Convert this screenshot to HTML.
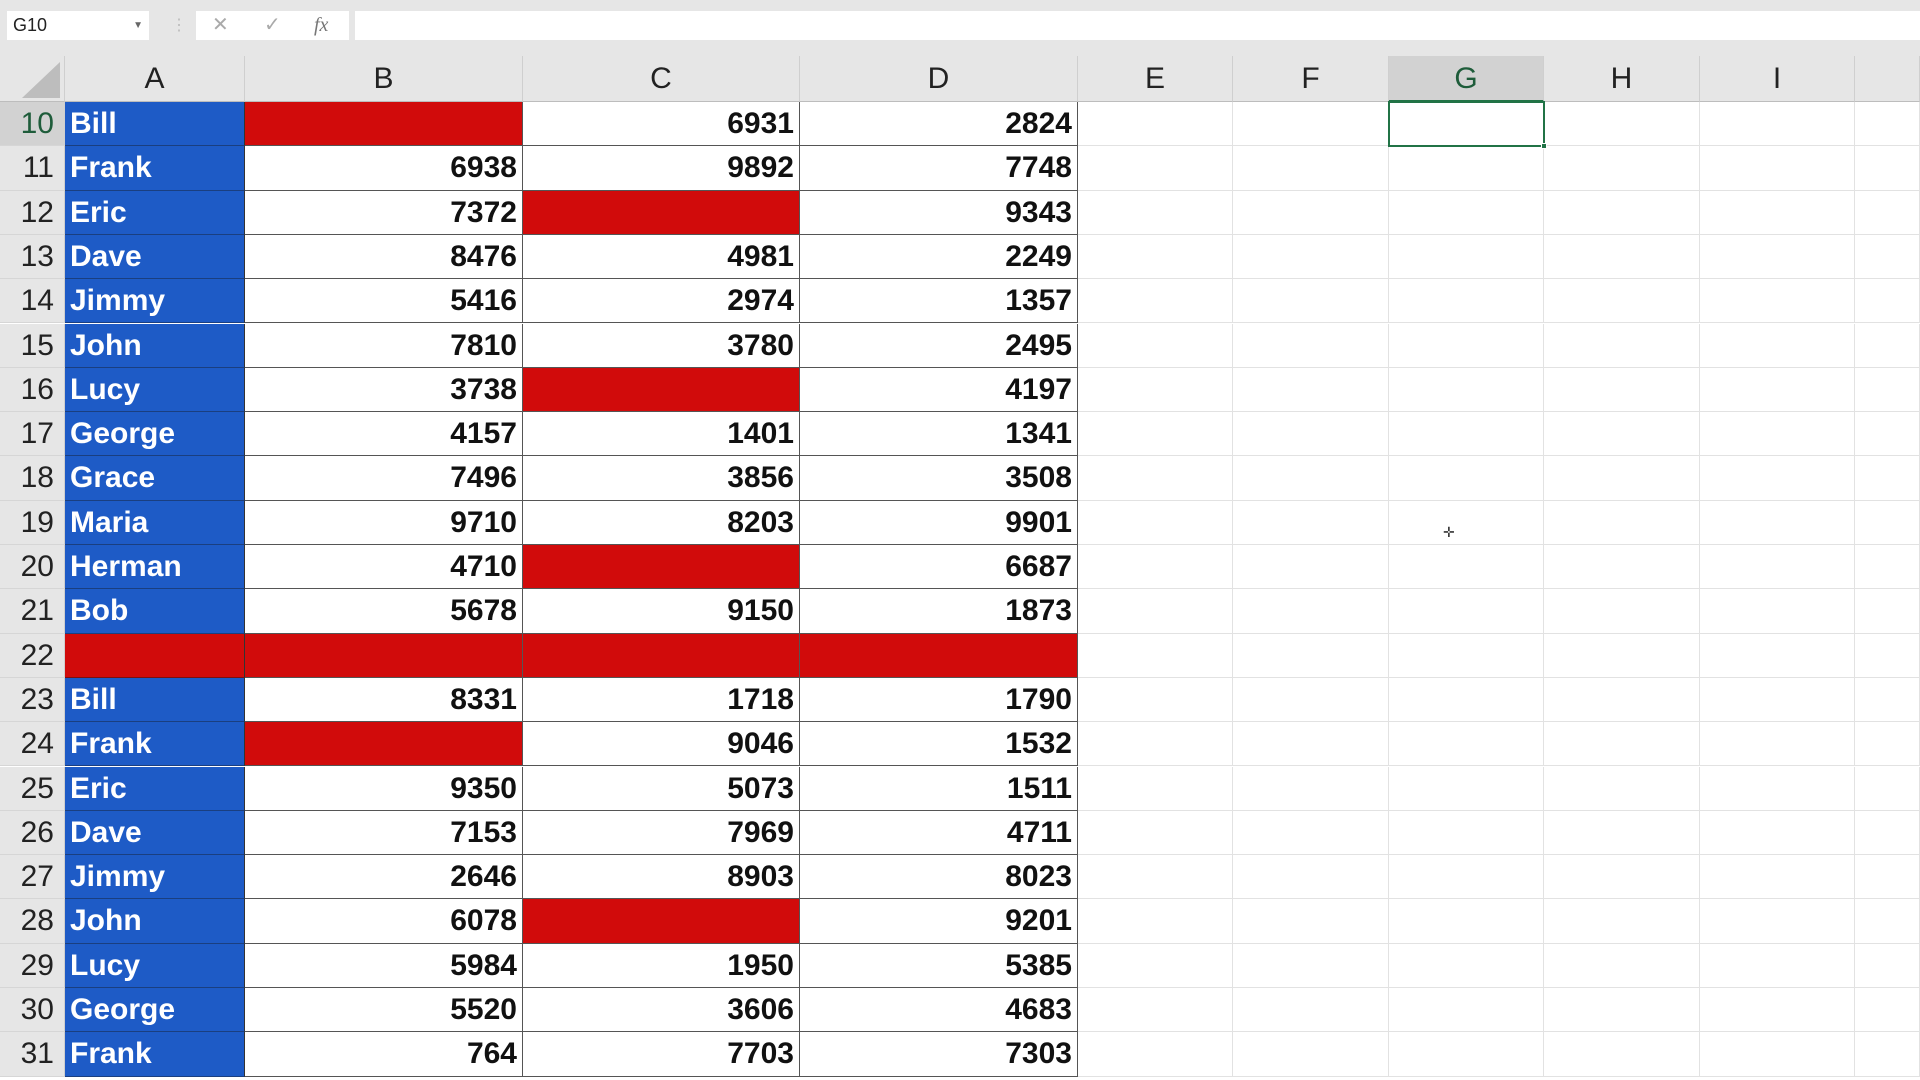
<!DOCTYPE html>
<html><head><meta charset="utf-8"><style>
*{box-sizing:border-box;margin:0;padding:0}
body{width:1920px;height:1080px;overflow:hidden;background:#fff;font-family:"Liberation Sans",sans-serif;position:relative}
.top{position:absolute;left:0;top:0;width:1920px;height:56px;background:#e6e6e6}
.nb{position:absolute;left:7px;top:11px;width:142px;height:29px;background:#fff;font-size:18px;line-height:29px;padding-left:6px;color:#222}
.nb span{position:absolute;right:6px;top:0;font-size:10px;color:#666}
.fx{position:absolute;left:196px;top:11px;width:153px;height:29px;background:#fff;color:#aaa;font-size:20px;line-height:29px}
.fin{position:absolute;left:355px;top:11px;width:1565px;height:29px;background:#fff}
.dots{position:absolute;left:171px;top:15px;color:#bbb;font-size:16px}
.hdr{position:absolute;top:56px;height:46px;background:#e6e6e6;border-right:1px solid #cfcfcf;border-bottom:1px solid #bdbdbd;text-align:center;font-size:30px;line-height:46px;color:#222}
.row{position:absolute;left:0;height:44.3px;width:1920px}
.c{position:absolute;top:0;height:44.3px;border-right:1px solid #e2e2e2;border-bottom:1px solid #e2e2e2}
.rh{left:0;width:65px;background:#e6e6e6;border-right:1px solid #cfcfcf;border-bottom:1px solid #d6d6d6;font-size:30px;line-height:44px;text-align:right;padding-right:10px;color:#222}
.a{left:65px;width:180px;background:#1e5bc6;color:#fff;font-weight:bold;font-size:30px;line-height:44px;padding-left:5px;border-right:1px solid #333;border-bottom:1px solid #1a3f80}
.n{width:278px;font-weight:bold;font-size:30px;line-height:44px;text-align:right;padding-right:5px;color:#111;border-right:1px solid #555;border-bottom:1px solid #555}
.b{left:245px}.cc{left:523px;width:277px}.d{left:800px}
.r{background:#d10b0b}
.e{left:1078px;width:155px}.f{left:1233px;width:156px}.g{left:1389px;width:155px}.h{left:1544px;width:156px}.i{left:1700px;width:155px}.j{left:1855px;width:65px}
</style></head><body>
<div class="top"></div>
<div class="nb">G10<span>▼</span></div>
<div class="dots">⋮</div>
<div class="fx"><span style="position:absolute;left:16px">✕</span><span style="position:absolute;left:68px">✓</span><span style="position:absolute;left:118px;font-family:'Liberation Serif',serif;font-style:italic;color:#777">fx</span></div>
<div class="fin"></div>
<div class="hdr" style="left:0;width:65px"><svg width="65" height="46" style="position:absolute;left:0;top:0"><polygon points="60,6 60,42 22,42" fill="#bdbdbd"/></svg></div>
<div class="hdr" style="left:65px;width:180px">A</div>
<div class="hdr" style="left:245px;width:278px">B</div>
<div class="hdr" style="left:523px;width:277px">C</div>
<div class="hdr" style="left:800px;width:278px">D</div>
<div class="hdr" style="left:1078px;width:155px">E</div>
<div class="hdr" style="left:1233px;width:156px">F</div>
<div class="hdr" style="left:1389px;width:155px;background:#d2d2d2;color:#1e5c3a;border-bottom:2px solid #217346">G</div>
<div class="hdr" style="left:1544px;width:156px">H</div>
<div class="hdr" style="left:1700px;width:155px">I</div>
<div class="hdr" style="left:1855px;width:65px"></div>

<div class="row" style="top:102px"><div class="c rh" style="color:#1e5c3a;background:#d2d2d2">10</div><div class="c a">Bill</div><div class="c n b r"></div><div class="c n cc">6931</div><div class="c n d">2824</div><div class="c e"></div><div class="c f"></div><div class="c g"></div><div class="c h"></div><div class="c i"></div><div class="c j"></div></div>
<div class="row" style="top:146.3px"><div class="c rh">11</div><div class="c a">Frank</div><div class="c n b">6938</div><div class="c n cc">9892</div><div class="c n d">7748</div><div class="c e"></div><div class="c f"></div><div class="c g"></div><div class="c h"></div><div class="c i"></div><div class="c j"></div></div>
<div class="row" style="top:190.6px"><div class="c rh">12</div><div class="c a">Eric</div><div class="c n b">7372</div><div class="c n cc r"></div><div class="c n d">9343</div><div class="c e"></div><div class="c f"></div><div class="c g"></div><div class="c h"></div><div class="c i"></div><div class="c j"></div></div>
<div class="row" style="top:234.9px"><div class="c rh">13</div><div class="c a">Dave</div><div class="c n b">8476</div><div class="c n cc">4981</div><div class="c n d">2249</div><div class="c e"></div><div class="c f"></div><div class="c g"></div><div class="c h"></div><div class="c i"></div><div class="c j"></div></div>
<div class="row" style="top:279.2px"><div class="c rh">14</div><div class="c a">Jimmy</div><div class="c n b">5416</div><div class="c n cc">2974</div><div class="c n d">1357</div><div class="c e"></div><div class="c f"></div><div class="c g"></div><div class="c h"></div><div class="c i"></div><div class="c j"></div></div>
<div class="row" style="top:323.5px"><div class="c rh">15</div><div class="c a">John</div><div class="c n b">7810</div><div class="c n cc">3780</div><div class="c n d">2495</div><div class="c e"></div><div class="c f"></div><div class="c g"></div><div class="c h"></div><div class="c i"></div><div class="c j"></div></div>
<div class="row" style="top:367.8px"><div class="c rh">16</div><div class="c a">Lucy</div><div class="c n b">3738</div><div class="c n cc r"></div><div class="c n d">4197</div><div class="c e"></div><div class="c f"></div><div class="c g"></div><div class="c h"></div><div class="c i"></div><div class="c j"></div></div>
<div class="row" style="top:412.1px"><div class="c rh">17</div><div class="c a">George</div><div class="c n b">4157</div><div class="c n cc">1401</div><div class="c n d">1341</div><div class="c e"></div><div class="c f"></div><div class="c g"></div><div class="c h"></div><div class="c i"></div><div class="c j"></div></div>
<div class="row" style="top:456.4px"><div class="c rh">18</div><div class="c a">Grace</div><div class="c n b">7496</div><div class="c n cc">3856</div><div class="c n d">3508</div><div class="c e"></div><div class="c f"></div><div class="c g"></div><div class="c h"></div><div class="c i"></div><div class="c j"></div></div>
<div class="row" style="top:500.7px"><div class="c rh">19</div><div class="c a">Maria</div><div class="c n b">9710</div><div class="c n cc">8203</div><div class="c n d">9901</div><div class="c e"></div><div class="c f"></div><div class="c g"></div><div class="c h"></div><div class="c i"></div><div class="c j"></div></div>
<div class="row" style="top:545px"><div class="c rh">20</div><div class="c a">Herman</div><div class="c n b">4710</div><div class="c n cc r"></div><div class="c n d">6687</div><div class="c e"></div><div class="c f"></div><div class="c g"></div><div class="c h"></div><div class="c i"></div><div class="c j"></div></div>
<div class="row" style="top:589.3px"><div class="c rh">21</div><div class="c a">Bob</div><div class="c n b">5678</div><div class="c n cc">9150</div><div class="c n d">1873</div><div class="c e"></div><div class="c f"></div><div class="c g"></div><div class="c h"></div><div class="c i"></div><div class="c j"></div></div>
<div class="row" style="top:633.6px"><div class="c rh">22</div><div class="c a r" style="border-bottom-color:#7a1010"></div><div class="c n b r"></div><div class="c n cc r"></div><div class="c n d r"></div><div class="c e"></div><div class="c f"></div><div class="c g"></div><div class="c h"></div><div class="c i"></div><div class="c j"></div></div>
<div class="row" style="top:677.9px"><div class="c rh">23</div><div class="c a">Bill</div><div class="c n b">8331</div><div class="c n cc">1718</div><div class="c n d">1790</div><div class="c e"></div><div class="c f"></div><div class="c g"></div><div class="c h"></div><div class="c i"></div><div class="c j"></div></div>
<div class="row" style="top:722.2px"><div class="c rh">24</div><div class="c a">Frank</div><div class="c n b r"></div><div class="c n cc">9046</div><div class="c n d">1532</div><div class="c e"></div><div class="c f"></div><div class="c g"></div><div class="c h"></div><div class="c i"></div><div class="c j"></div></div>
<div class="row" style="top:766.5px"><div class="c rh">25</div><div class="c a">Eric</div><div class="c n b">9350</div><div class="c n cc">5073</div><div class="c n d">1511</div><div class="c e"></div><div class="c f"></div><div class="c g"></div><div class="c h"></div><div class="c i"></div><div class="c j"></div></div>
<div class="row" style="top:810.8px"><div class="c rh">26</div><div class="c a">Dave</div><div class="c n b">7153</div><div class="c n cc">7969</div><div class="c n d">4711</div><div class="c e"></div><div class="c f"></div><div class="c g"></div><div class="c h"></div><div class="c i"></div><div class="c j"></div></div>
<div class="row" style="top:855.1px"><div class="c rh">27</div><div class="c a">Jimmy</div><div class="c n b">2646</div><div class="c n cc">8903</div><div class="c n d">8023</div><div class="c e"></div><div class="c f"></div><div class="c g"></div><div class="c h"></div><div class="c i"></div><div class="c j"></div></div>
<div class="row" style="top:899.4px"><div class="c rh">28</div><div class="c a">John</div><div class="c n b">6078</div><div class="c n cc r"></div><div class="c n d">9201</div><div class="c e"></div><div class="c f"></div><div class="c g"></div><div class="c h"></div><div class="c i"></div><div class="c j"></div></div>
<div class="row" style="top:943.7px"><div class="c rh">29</div><div class="c a">Lucy</div><div class="c n b">5984</div><div class="c n cc">1950</div><div class="c n d">5385</div><div class="c e"></div><div class="c f"></div><div class="c g"></div><div class="c h"></div><div class="c i"></div><div class="c j"></div></div>
<div class="row" style="top:988px"><div class="c rh">30</div><div class="c a">George</div><div class="c n b">5520</div><div class="c n cc">3606</div><div class="c n d">4683</div><div class="c e"></div><div class="c f"></div><div class="c g"></div><div class="c h"></div><div class="c i"></div><div class="c j"></div></div>
<div class="row" style="top:1032.3px"><div class="c rh">31</div><div class="c a">Frank</div><div class="c n b">764</div><div class="c n cc">7703</div><div class="c n d">7303</div><div class="c e"></div><div class="c f"></div><div class="c g"></div><div class="c h"></div><div class="c i"></div><div class="c j"></div></div>

<div style="position:absolute;left:1388px;top:101px;width:157px;height:46px;border:2px solid #217346"></div>
<div style="position:absolute;left:1541px;top:143px;width:6px;height:6px;background:#217346;border:1px solid #fff"></div>
<div style="position:absolute;left:1443px;top:524px;font-size:14px;color:#333">✛</div>
</body></html>
